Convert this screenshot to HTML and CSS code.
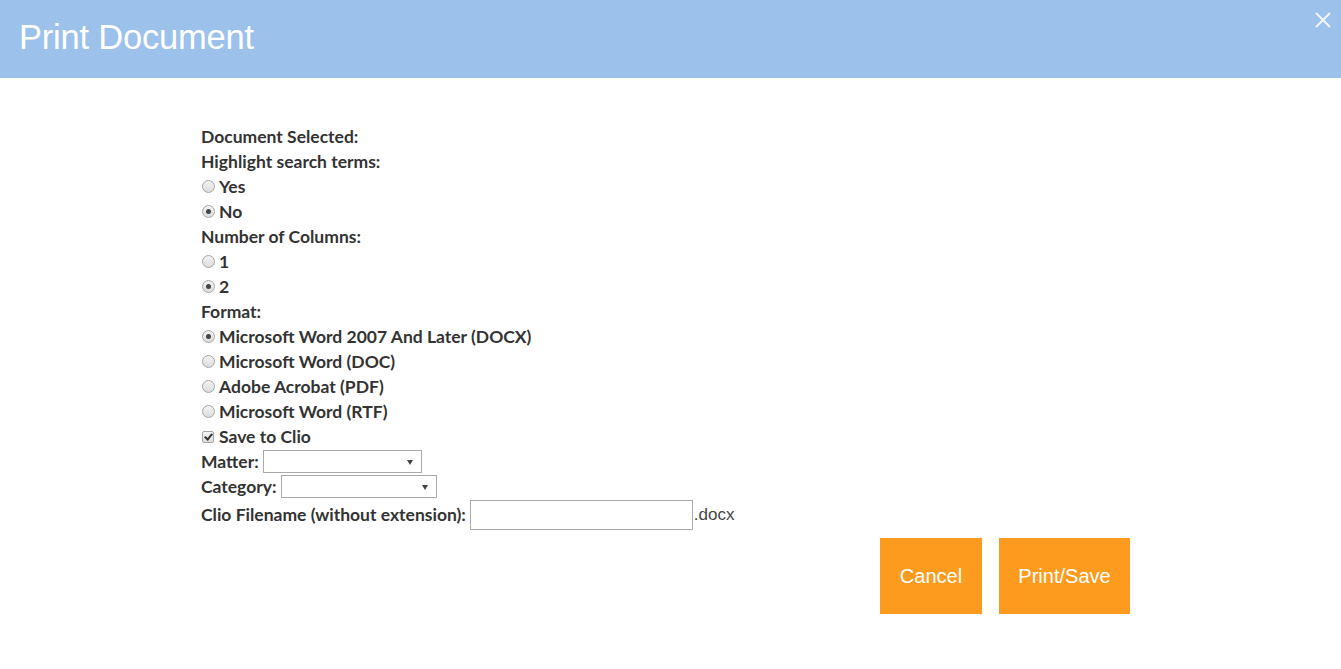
FILE: index.html
```html
<!DOCTYPE html>
<html>
<head>
<meta charset="utf-8">
<title>Print Document</title>
<link rel="stylesheet" href="styles.css">
</head>
<body>
<div class="dialog">
  <header class="dlg-header">
    <h1 class="dlg-title">Print Document</h1>
    <span class="dlg-close" aria-label="Close">
      <svg width="18" height="18" viewBox="0 0 18 18"><path d="M2 2 L16 16 M16 2 L2 16" stroke="#fff" stroke-width="2" fill="none"/></svg>
    </span>
  </header>
  <form class="dlg-body">
    <div class="row label">Document Selected:</div>
    <div class="row label">Highlight search terms:</div>
    <label class="row opt"><span class="radio"></span>Yes</label>
    <label class="row opt"><span class="radio on"></span>No</label>
    <div class="row label">Number of Columns:</div>
    <label class="row opt"><span class="radio"></span>1</label>
    <label class="row opt"><span class="radio on"></span>2</label>
    <div class="row label">Format:</div>
    <label class="row opt"><span class="radio on"></span>Microsoft Word 2007 And Later (DOCX)</label>
    <label class="row opt"><span class="radio"></span>Microsoft Word (DOC)</label>
    <label class="row opt"><span class="radio"></span>Adobe Acrobat (PDF)</label>
    <label class="row opt"><span class="radio"></span>Microsoft Word (RTF)</label>
    <label class="row opt"><span class="check on"></span>Save to Clio</label>
    <div class="row field"><span class="label">Matter:</span><span class="select sel-matter"><span class="arrow"></span></span></div>
    <div class="row field"><span class="label">Category:</span><span class="select sel-cat"><span class="arrow"></span></span></div>
    <div class="row field file"><span class="label">Clio Filename (without extension):</span><span class="textbox"></span><span class="ext">.docx</span></div>
    <div class="actions">
      <button type="button" class="btn btn-cancel">Cancel</button>
      <button type="button" class="btn btn-save">Print/Save</button>
    </div>
  </form>
</div>
</body>
</html>
```

FILE: styles.css
```css
html, body {
  margin: 0;
  padding: 0;
  background: #fff;
}
.dialog {
  width: 1341px;
  height: 669px;
  position: relative;
  font-family: Lato, "Liberation Sans", sans-serif;
  color: #333;
}
.dlg-header {
  height: 78px;
  background: #9cc1eb;
  display: flex;
  align-items: center;
  padding-left: 19px;
}
.dlg-title {
  margin: 0;
  font-family: "Liberation Sans", Arial, sans-serif;
  font-weight: normal;
  font-size: 34.5px;
  color: #fff;
  letter-spacing: -0.2px;
  padding-bottom: 3px;
}
.dlg-close {
  position: absolute;
  top: 11px;
  right: 9px;
  width: 18px;
  height: 18px;
  opacity: 0.85;
}
.dlg-body {
  padding: 46px 0 0 201px;
  display: flex;
  flex-direction: column;
}
.row {
  height: 25px;
  line-height: 25px;
  font-size: 17.5px;
  font-weight: bold;
  display: flex;
  align-items: center;
}
.label {
  font-weight: bold;
}
.opt {
  cursor: default;
}
.radio {
  width: 11px;
  height: 11px;
  border: 1px solid #a6a6a6;
  border-radius: 50%;
  background: linear-gradient(#f4f4f4, #dcdcdc);
  margin: 0 4px 0 1px;
  position: relative;
  flex: none;
}
.radio.on::after {
  content: "";
  position: absolute;
  left: 3px;
  top: 3px;
  width: 5px;
  height: 5px;
  border-radius: 50%;
  background: #444;
}
.check {
  width: 10px;
  height: 10px;
  border: 1px solid #a6a6a6;
  border-radius: 2px;
  background: linear-gradient(#f6f6f6, #dedede);
  margin: 0 5px 0 1px;
  position: relative;
  flex: none;
}
.check.on::after {
  content: "";
  position: absolute;
  left: 3px;
  top: 0px;
  width: 3px;
  height: 6px;
  border: solid #333;
  border-width: 0 2px 2px 0;
  transform: rotate(40deg);
}
.field .label {
  margin-right: 4px;
}
.select {
  height: 21px;
  border: 1px solid #a9a9a9;
  background: #fff;
  position: relative;
  box-sizing: content-box;
}
.sel-matter { width: 157px; }
.sel-cat { width: 154px; }
.arrow {
  position: absolute;
  right: 8px;
  top: 9px;
  width: 0;
  height: 0;
  border-left: 3px solid transparent;
  border-right: 3px solid transparent;
  border-top: 5px solid #444;
}
.file {
  height: 32px;
  line-height: 32px;
}
.textbox {
  width: 221px;
  height: 28px;
  border: 1px solid #a9a9a9;
  background: #fff;
}
.ext {
  font-family: "Liberation Sans", Arial, sans-serif;
  font-weight: normal;
  font-size: 17px;
  color: #444;
  margin-left: 1px;
}
.actions {
  display: flex;
  gap: 17px;
  margin: 7px 0 0 679px;
}
.btn {
  height: 76px;
  border: none;
  background: #fd9b1e;
  color: #fff;
  font-family: "Liberation Sans", Arial, sans-serif;
  font-size: 20px;
  padding: 0;
}
.btn-cancel { width: 102px; }
.btn-save { width: 131px; }
```
